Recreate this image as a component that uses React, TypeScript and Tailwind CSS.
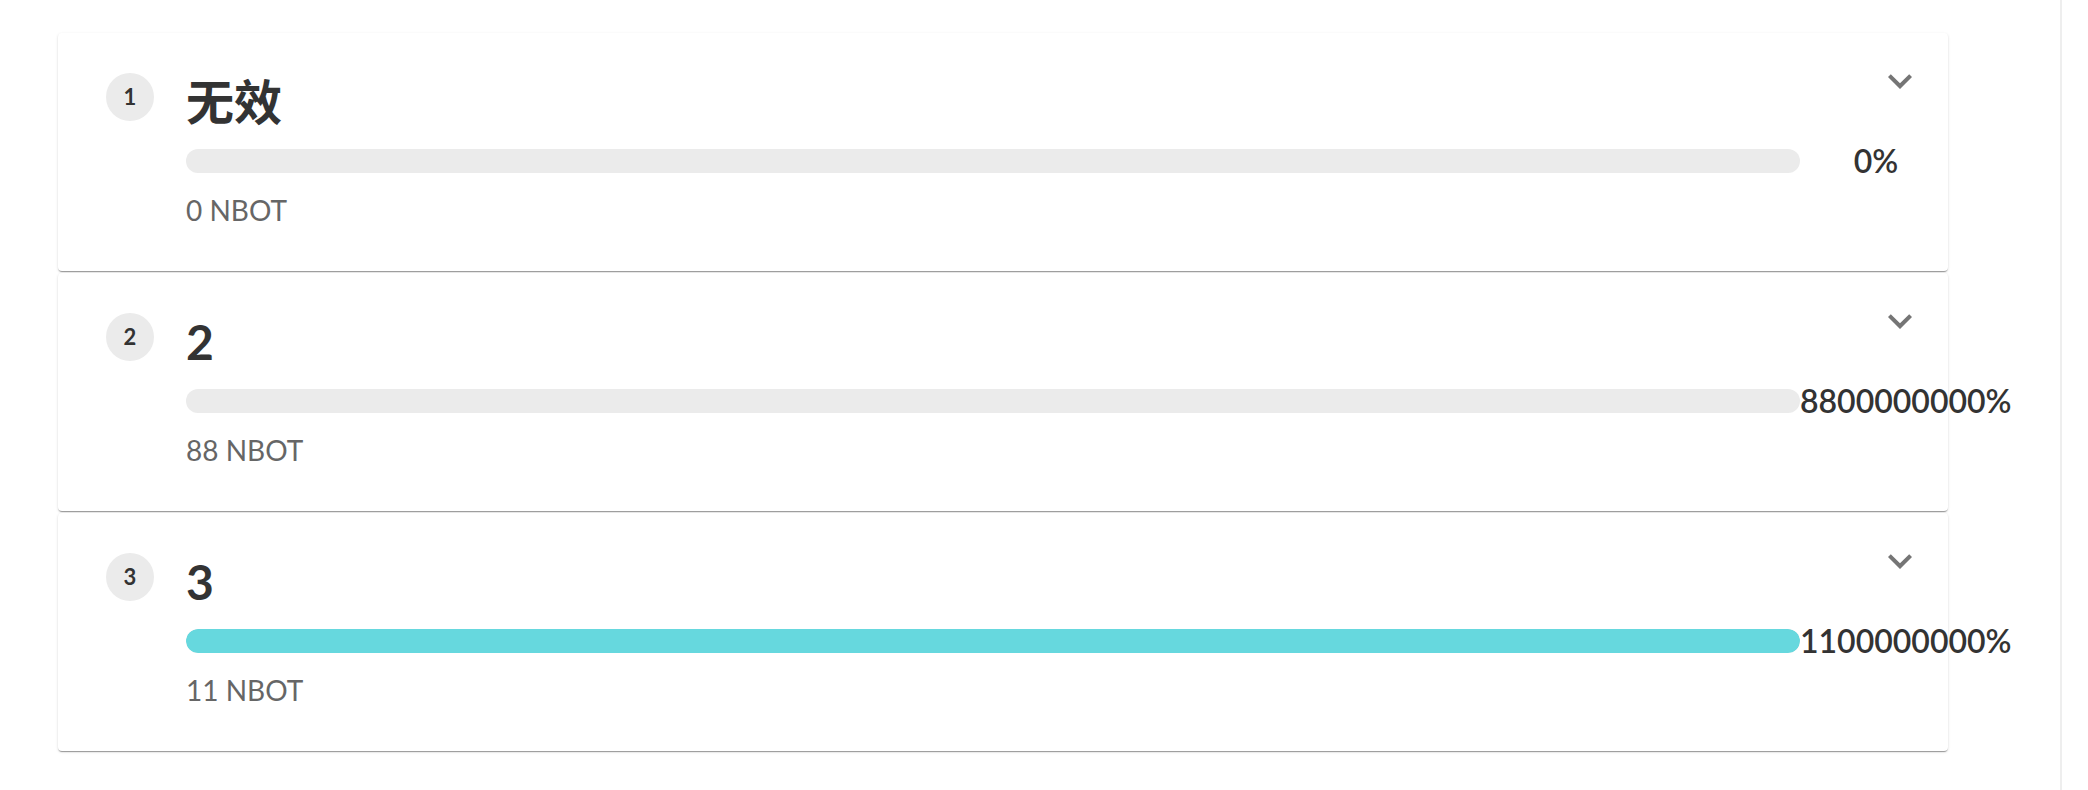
import React from 'react';

interface Option {
    index: number;
    title: string;
    amount: number;
    percent: string;
    fill: number;
}

const options: Option[] = [
    { index: 1, title: '无效', amount: 0, percent: '0%', fill: 0 },
    { index: 2, title: '2', amount: 88, percent: '8800000000%', fill: 0 },
    { index: 3, title: '3', amount: 11, percent: '1100000000%', fill: 100 },
];

const ExpandMore = () => (
    <svg viewBox="0 0 24 24" className="w-12 h-12" fill="#757575">
        <path d="M16.59 8.59 12 13.17 7.41 8.59 6 10l6 6 6-6z" />
    </svg>
);

const OptionCard: React.FC<{ option: Option }> = ({ option }) => {
    return (
        <div className="relative h-[238px] bg-white rounded-[4px] shadow-[0px_2px_1px_-1px_rgba(0,0,0,0.25),0px_1px_1px_0px_rgba(0,0,0,0.14),0px_1px_3px_0px_rgba(0,0,0,0.12)] flex gap-8 pt-10 pl-12">
            <div className="w-12 h-12 shrink-0 rounded-full bg-[#ebebeb] flex items-center justify-center text-[22px] leading-none font-bold text-[#333]">
                {option.index}
            </div>
            <div className="flex-1 flex flex-col -mr-1">
                <div className="text-[48px] leading-[1.2] font-bold text-[#333] h-[58px]">{option.title}</div>
                <div className="flex items-center mt-[11px]">
                    <div className="flex-1 h-6 rounded-full bg-[#ebebeb] overflow-hidden">
                        <div className="h-full rounded-full bg-[#66d8de]" style={{ width: `${option.fill}%` }} />
                    </div>
                    <div className="w-[152px] shrink-0 text-center text-[32px] leading-[1.2] font-semibold text-[#333] whitespace-nowrap">
                        {option.percent}
                    </div>
                </div>
                <div className="mt-[14px] text-[28px] leading-[1.2] text-[#666]">{option.amount} NBOT</div>
            </div>
            <button className="absolute top-6 right-6">
                <ExpandMore />
            </button>
        </div>
    );
};

export default function App() {
    return (
        <div className="w-[2062px] h-[790px] border-r-2 border-[#eeeeee] bg-white" style={{ fontFamily: 'Lato, "Noto Sans CJK SC", sans-serif' }}>
            <div className="pt-[33px] pl-[58px] w-[1948px] flex flex-col gap-[2px]">
                {options.map(o => (
                    <OptionCard key={o.index} option={o} />
                ))}
            </div>
        </div>
    );
}
